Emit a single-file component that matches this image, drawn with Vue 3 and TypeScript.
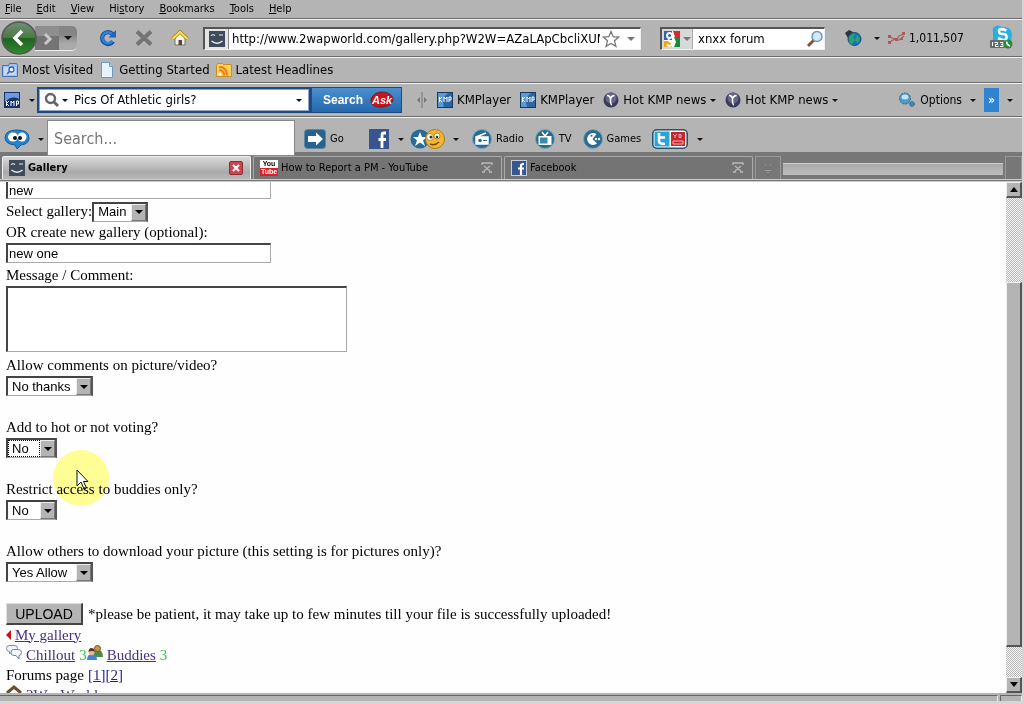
<script setup lang="ts">
import { ref } from 'vue'

interface Question {
  id: string
  label: string
  value: string
  wide: boolean
  focused: boolean
}

const menus = ['File', 'Edit', 'View', 'History', 'Bookmarks', 'Tools', 'Help']
const underlined: Record<string, number> = { History: 2 }

const url = ref('http://www.2wapworld.com/gallery.php?W2W=AZaLApCbcliXUMq')
const webSearch = ref('xnxx forum')
const askSearch = ref('Pics Of Athletic girls?')
const barSearch = ref('')
const title = ref('new')
const gallery = ref('Main')
const newGallery = ref('new one')
const message = ref('')

const questions = ref<Question[]>([
  { id: 'comments', label: 'Allow comments on picture/video?', value: 'No thanks', wide: true, focused: false },
  { id: 'voting', label: 'Add to hot or not voting?', value: 'No', wide: false, focused: true },
  { id: 'buddies', label: 'Restrict access to buddies only?', value: 'No', wide: false, focused: false },
  { id: 'download', label: 'Allow others to download your picture (this setting is for pictures only)?', value: 'Yes Allow', wide: true, focused: false },
])
</script>

<template>
  <div class="window">
    <nav class="menubar" aria-label="Menu">
      <button v-for="m in menus" :key="m" type="button">{{ m.slice(0, underlined[m] ?? 0) }}<u>{{ m.charAt(underlined[m] ?? 0) }}</u>{{ m.slice((underlined[m] ?? 0) + 1) }}</button>
    </nav>

    <div class="navbar">
      <div class="history">
        <button type="button" class="back" aria-label="Back">
          <svg width="36" height="34" viewBox="0 0 36 34">
            <defs><linearGradient id="gb" x1="0" y1="0" x2="0" y2="1"><stop offset="0" stop-color="#6f8f6f" /><stop offset=".48" stop-color="#4b7b4b" /><stop offset=".52" stop-color="#1f641f" /><stop offset="1" stop-color="#2f8a2f" /></linearGradient></defs>
            <ellipse cx="18" cy="17" rx="17" ry="16" fill="url(#gb)" stroke="#555" stroke-width="1.5" />
            <path d="M21 10l-7 7 7 7" fill="none" stroke="#fff" stroke-width="3.5" />
          </svg>
        </button>
        <button type="button" class="forward" aria-label="Forward">
          <svg width="24" height="25" viewBox="0 0 24 25"><path d="M10 8l5 5-5 5" fill="none" stroke="#c8c8c8" stroke-width="3" /></svg>
        </button>
        <button type="button" class="recent" aria-label="Recent pages"><i class="caret"></i></button>
      </div>
      <div class="navicons">
        <button type="button" aria-label="Reload">
          <svg width="18" height="18" viewBox="0 0 18 18"><path d="M14 12.5A6 6 0 1 1 13.5 5" fill="none" stroke="#174a9a" stroke-width="4.2" /><path d="M13.5 12A5.600 5.600 0 1 1 13 5" fill="none" stroke="#2b86dc" stroke-width="2.400" /><path d="M17 1v7.500H9.500z" fill="#1e64b8" /></svg>
        </button>
        <button type="button" aria-label="Stop">
          <svg width="18" height="18" viewBox="0 0 18 18"><path d="M2 2.500l14 13M16 2.500l-14 13" stroke="#747474" stroke-width="4" /></svg>
        </button>
        <button type="button" aria-label="Home">
          <svg width="18" height="18" viewBox="0 0 18 18"><path d="M4 9l5-5 5 5v7H4z" fill="#f4f1ea" stroke="#777" /><path d="M7.500 11h3.500v5H7.500z" fill="#5a4630" /><path d="M1.500 10L9 2.800l7.500 7.200" fill="none" stroke="#9b7a10" stroke-width="3.400" /><path d="M1.500 10L9 2.800l7.500 7.200" fill="none" stroke="#ffe14a" stroke-width="2" /></svg>
        </button>
      </div>
      <div class="urlbox sunken">
        <span class="site"><svg width="16" height="16" viewBox="0 0 16 16"><rect width="16" height="16" fill="#3f4a5c" /><path d="M2 4.500q2-1.500 4 0M10 4h4" fill="none" stroke="#e8ecf4" stroke-width="1.200" /><path d="M2.500 10q5.500 4.500 11 0" fill="none" stroke="#e8ecf4" stroke-width="1.500" /></svg></span>
        <input v-model="url" type="text" aria-label="Address" />
        <svg width="18" height="18" viewBox="0 0 18 18"><path d="M9 1.500l2.200 5.200 5.500.4-4.200 3.700 1.400 5.600L9 13.400l-4.900 3 1.400-5.600L1.300 7.100l5.500-.4z" fill="#fff" stroke="#777" stroke-width="1.300" /></svg>
        <i class="caret grey"></i>
      </div>
      <div class="searchbox sunken">
        <span class="engine">
          <svg width="16" height="16" viewBox="0 0 16 16"><rect width="16" height="16" fill="#fff" /><path d="M9 0h7v6h-5z" fill="#d92a2a" /><path d="M10 6h6v10h-6l2-5z" fill="#198a3c" /><path d="M0 0h8v9H0z" fill="#2d62b8" /><path d="M0 10h8v6H0z" fill="#f0a51e" /><circle cx="5.500" cy="4.500" r="2.500" fill="#2d62b8" stroke="#fff" stroke-width="2" /><path d="M5 8q-1 2 2 3t0 3.500q-3 1-4-1" fill="none" stroke="#fff" stroke-width="2" /></svg>
          <i class="caret grey"></i>
        </span>
        <input v-model="webSearch" type="text" aria-label="Web search" />
        <svg width="18" height="18" viewBox="0 0 18 18"><path d="M8 10L2 16" stroke="#8a5034" stroke-width="3" /><circle cx="11" cy="6.500" r="5" fill="#cfe9fb" stroke="#7297bb" stroke-width="1.500" /></svg>
      </div>
      <div class="status-icons">
        <svg width="18" height="18" viewBox="0 0 18 18"><path d="M1 4l4-3 4 2-5 6z" fill="#29343e" /><circle cx="10.500" cy="10" r="6.500" fill="#1e6fc8" stroke="#1c4a72" /><path d="M5 8q3-4 7-3l-3 3 2 3-3 5q-4-3-3-8zM13 6l3 3-2 5-3-3z" fill="#27a56a" /></svg>
        <i class="caret"></i>
        <span class="rank"><svg width="18" height="14" viewBox="0 0 18 14"><path d="M1 5l3 2 4 2 3-4 5-2M2 11l5-3 4 1 5-4" fill="none" stroke="#b05a5a" stroke-width="1.200" /><path d="M0 4h3v3H0zM0 10h3v3H0zM7 7h3v3H7zM14 1h3v3h-3zM12 7h3v2h-3z" fill="#a95a5a" /></svg>1,011,507</span>
        <svg width="26" height="26" viewBox="0 0 26 26"><path d="M4 2q4-3 8 0 9-1 10 7l-1 8H3V7q-1-3 1-5z" fill="#27aee3" /><path d="M16.500 5.500Q9 2.500 9 6t4 3 3.500 4T8 13" fill="none" stroke="#fff" stroke-width="2.600" /><rect y="15" width="15" height="8" rx="1" fill="#636b68" /><path d="M2.500 17v4M4.500 17.500h3v2h-2v2h3M10 17.500h3v4h-3M11 19.500h2" fill="none" stroke="#fff" stroke-width="1" /><circle cx="18" cy="19" r="4.500" fill="#2c8a35" /><path d="M17 16.500q-1 3 3 4.500" fill="none" stroke="#fff" stroke-width="1.500" /></svg>
      </div>
    </div>

    <div class="bookmarks">
      <a href="#"><svg width="16" height="16" viewBox="0 0 16 16"><path d="M.5 3.500h6l1-2h7l1 2v11H.5z" fill="#9fc0f2" stroke="#4a70b4" /><path d="M2 5h12v8H2z" fill="#c5dafa" /><circle cx="9.500" cy="7.500" r="2.500" fill="#eaf3ff" stroke="#3360b8" stroke-width="1.300" /><path d="M7.500 9.500L5 12" stroke="#3360b8" stroke-width="1.600" /></svg>Most Visited</a>
      <a href="#"><svg width="16" height="16" viewBox="0 0 16 16"><path d="M2.500.5h8l3 4v11h-11z" fill="#e6f2ff" stroke="#7296bf" /><path d="M10.500.5v4h3" fill="#b6d3f2" stroke="#7296bf" /></svg>Getting Started</a>
      <a href="#"><svg width="16" height="16" viewBox="0 0 16 16"><path d="M.5 3.500l1-2h5l1 1h8v12H.5z" fill="#ffcf58" stroke="#c88d22" /><circle cx="4" cy="12" r="1.500" fill="#fff" /><path d="M3 8q5 0 5 5.500M3 5q8 0 8 8.500" fill="none" stroke="#f07c14" stroke-width="2" /></svg>Latest Headlines</a>
    </div>

    <div class="askbar">
      <div class="kmp-menu"><svg width="16" height="16" viewBox="0 0 16 16"><rect width="16" height="16" fill="#17336e" /><path d="M1 1h14v6q-7-4-14 3z" fill="#6f9ade" /><path d="M2.500 9v5M5 9l-2.500 2.500L5 14M7 14V9l1.500 2L10 9v5M12.500 14V9h2v3h-2" fill="none" stroke="#fff" stroke-width="1" /></svg><i class="caret"></i></div>
      <div class="askbox">
        <svg width="16" height="16" viewBox="0 0 16 16"><circle cx="6.500" cy="6.500" r="4.500" fill="none" stroke="#666" stroke-width="2.400" /><path d="M10 10l4 4" stroke="#666" stroke-width="3" /></svg>
        <i class="caret"></i>
        <input v-model="askSearch" type="text" aria-label="Ask search" />
        <i class="caret"></i>
      </div>
      <button type="button" class="askbtn">Search
        <span class="ask"><svg width="24" height="18" viewBox="0 0 24 18"><path d="M1 8Q4 1 12 1t11 6q0 8-10 9T1 11z" fill="#c4161c" stroke="#7d1a24" /></svg><em>Ask</em></span>
      </button>
      <div class="asklinks">
        <svg class="grip" width="12" height="16" viewBox="0 0 12 16"><path d="M6 0v16" stroke="#777" /><path d="M4 5v6L1 8zM8 5v6l3-3z" fill="#777" /></svg>
        <button v-for="n in 2" :key="n" type="button" class="tool"><svg width="16" height="16" viewBox="0 0 16 16"><rect x=".5" y=".5" width="15" height="15" fill="#2a66a2" stroke="#173861" /><path d="M1 1h10Q4 6 7 15H1z" fill="#5a9cd2" /><path d="M2.500 5v5M5 5L2.500 7.500 5 10M7 10V5l1.500 2L10 5v5M12 10V5h2v3h-2" fill="none" stroke="#fff" stroke-width="1" /></svg>KMPlayer</button>
        <button v-for="n in 2" :key="'h' + n" type="button" class="tool"><svg width="16" height="16" viewBox="0 0 16 16"><circle cx="8" cy="8" r="7.500" fill="#39395c" /><circle cx="8" cy="6" r="5.500" fill="#66668c" /><path d="M4 3.500q3.500 0 3.500 4.500T9 13M11.500 3.500Q7 4 7.500 9" fill="none" stroke="#fff" stroke-width="1.500" /></svg>Hot KMP news<i class="caret"></i></button>
      </div>
      <div class="askend">
        <button type="button" class="tool"><svg width="18" height="16" viewBox="0 0 18 16"><circle cx="7" cy="6.500" r="5.500" fill="#4d9cc8" stroke="#31607c" stroke-dasharray="2 1" /><ellipse cx="7" cy="5" rx="3.500" ry="2.500" fill="#bfe5f7" /><circle cx="14" cy="12" r="2.500" fill="#4485ad" stroke="#31607c" stroke-dasharray="1 1" /></svg>Options</button>
        <i class="caret"></i>
        <button type="button" class="more" aria-label="More">»</button>
        <i class="caret"></i>
      </div>
    </div>

    <div class="babbar">
      <div class="bubble"><svg width="26" height="20" viewBox="0 0 26 20"><path d="M1 9Q1 1 13 1t12 8q0 6-8 7l-4 4-2-4Q1 15 1 9z" fill="#2383cf" stroke="#1a5d99" /><ellipse cx="9" cy="8" rx="5" ry="4.500" fill="#fff" /><ellipse cx="18" cy="8" rx="4.500" ry="4.500" fill="#fff" /><circle cx="11" cy="9" r="2" fill="#111" /><circle cx="16" cy="9" r="2" fill="#111" /></svg><i class="caret"></i></div>
      <input v-model="barSearch" class="babinput" type="text" placeholder="Search..." aria-label="Toolbar search" />
      <button type="button" class="tool go"><svg width="22" height="20" viewBox="0 0 22 20"><rect x=".5" y=".5" width="21" height="19" rx="3" fill="#28628e" stroke="#5e87a4" /><path d="M4 7h8V3.500l7 6.500-7 6.500V13H4z" fill="#fff" /></svg>Go</button>
      <div class="pair fb"><svg width="20" height="20" viewBox="0 0 20 20"><rect width="20" height="20" fill="#37558f" /><path d="M17 4h-2q-2 0-2 2v13M9.500 10.500H17" fill="none" stroke="#fff" stroke-width="2.800" /></svg><i class="caret"></i></div>
      <div class="pair smile"><svg width="36" height="20" viewBox="0 0 36 20"><circle cx="10" cy="10" r="9.500" fill="#266b9a" /><path d="M10 3l2 5h5l-4 3.500 2 5.500-5-3.500L5 17l2-5.500L3 8h5z" fill="#fff" /><circle cx="25" cy="10" r="9.500" fill="#f5b82a" stroke="#a67b1c" /><circle cx="20" cy="8" r="3.500" fill="#fff" stroke="#b98924" /><circle cx="21" cy="8" r="1.500" fill="#333" /><circle cx="27" cy="7" r="3" fill="#fff" stroke="#b98924" /><circle cx="27" cy="8" r="1.300" fill="#333" /><path d="M20 15q5 2 9-2" fill="none" stroke="#7c4514" stroke-width="1.500" /></svg><i class="caret"></i></div>
      <div class="medialinks">
        <button type="button" class="tool"><svg width="20" height="20" viewBox="0 0 20 20"><circle cx="10" cy="10" r="9.500" fill="#2b6b8f" stroke="#78a4bc" /><path d="M4 8h12v7H4zM4 8l10-4" fill="#fff" stroke="#fff" stroke-width="1.500" /><circle cx="8" cy="11.500" r="1.800" fill="#2b6b8f" /><path d="M11 11.500h4" stroke="#2b6b8f" /></svg>Radio</button>
        <button type="button" class="tool"><svg width="20" height="20" viewBox="0 0 20 20"><circle cx="10" cy="10" r="9.500" fill="#2b6b8f" stroke="#78a4bc" /><path d="M7 3l3 4 3-4" fill="none" stroke="#fff" stroke-width="1.500" /><rect x="3.500" y="7" width="13" height="9" fill="#fff" /><path d="M5 8.500h7.500v6H5z" fill="#3d87ad" /></svg>TV</button>
        <button type="button" class="tool"><svg width="20" height="20" viewBox="0 0 20 20"><circle cx="10" cy="10" r="9.500" fill="#2b6b8f" stroke="#78a4bc" /><path d="M13.500 5A6 6 0 1 0 14 14.500L9.500 10z" fill="#fff" /><circle cx="8.500" cy="6.800" r="1" fill="#2b6b8f" /><circle cx="13" cy="10" r="1.200" fill="#fff" /><circle cx="16" cy="10" r="1.200" fill="#fff" /></svg>Games</button>
        <div class="pair social"><svg width="36" height="20" viewBox="0 0 36 20"><rect x=".8" y=".8" width="34.400" height="18.400" rx="4" fill="#fff" stroke="#27536c" stroke-width="1.600" /><path d="M2.500 2.500h15v15h-15z" fill="#2ca5d5" /><path d="M7 4v8q0 3 6 3M7 8.500h6" fill="none" stroke="#fff" stroke-width="2.600" /><rect x="19" y="3" width="14" height="14" fill="#c9262c" /><path d="M21 5l2 2 2-2M23 7v2M27 5.500h2v3h-2zM21 12h10v3H21z" fill="none" stroke="#e9b7b9" /></svg><i class="caret"></i></div>
      </div>
    </div>

    <div class="tabstrip">
      <div class="tab active">
        <svg width="16" height="16" viewBox="0 0 16 16"><rect width="16" height="16" fill="#3f4a5c" /><path d="M2 4.500q2-1.500 4 0M10 4h4" fill="none" stroke="#e8ecf4" stroke-width="1.200" /><path d="M2.500 10q5.500 4.500 11 0" fill="none" stroke="#e8ecf4" stroke-width="1.500" /></svg>
        <span>Gallery</span>
        <button type="button" aria-label="Close tab"><svg width="14" height="14" viewBox="0 0 14 14"><rect x=".5" y=".5" width="13" height="13" rx="1.500" fill="#c9464f" stroke="#8e2b33" /><path d="M4 4l6 6M10 4l-6 6" stroke="#fff" stroke-width="2" /></svg></button>
      </div>
      <div class="tab">
        <span class="yt"><b>You</b><b class="tube">Tube</b></span>
        <span>How to Report a PM - YouTube</span>
        <button type="button" aria-label="Close tab"><svg width="14" height="14" viewBox="0 0 14 14"><path d="M2 4V2h10v2M4 5l6 5M10 5l-6 5M2 11h3M9 11h3" fill="none" stroke="#b8b8b8" stroke-width="1.300" /></svg></button>
      </div>
      <div class="tab">
        <svg width="16" height="16" viewBox="0 0 16 16"><rect x=".5" y=".5" width="15" height="15" fill="#37558f" stroke="#c5cede" /><path d="M13 4h-1q-2 0-2 2v9M7 8.500h6" fill="none" stroke="#fff" stroke-width="2.200" /></svg>
        <span>Facebook</span>
        <button type="button" aria-label="Close tab"><svg width="14" height="14" viewBox="0 0 14 14"><path d="M2 4V2h10v2M4 5l6 5M10 5l-6 5M2 11h3M9 11h3" fill="none" stroke="#b8b8b8" stroke-width="1.300" /></svg></button>
      </div>
      <div class="newtab"><svg width="12" height="12" viewBox="0 0 12 12"><path d="M3 3h1M8 3h1M3 8.500h6M5 10.500h2" stroke="#9c9c9c" /></svg></div>
      <div class="stripe"></div>
      <div class="alltabs"></div>
    </div>

    <div class="viewport">
      <main class="page">
        <input v-model="title" class="field cut" type="text" aria-label="Title" />
        <div class="row"><label for="gallery">Select gallery:</label><span class="combo main"><select id="gallery" v-model="gallery"><option>Main</option></select><i class="drop"></i></span></div>
        <label class="row" for="newgallery">OR create new gallery (optional):</label>
        <input id="newgallery" v-model="newGallery" class="field" type="text" />
        <label class="row msg" for="message">Message / Comment:</label>
        <textarea id="message" v-model="message" class="field"></textarea>
        <div v-for="q in questions" :key="q.id" class="question">
          <label class="row" :for="q.id">{{ q.label }}</label>
          <span class="combo" :class="{ wide: q.wide, focused: q.focused }"><select :id="q.id" v-model="q.value"><option>{{ q.value }}</option></select><i class="drop"></i></span>
        </div>
        <div class="upload"><button type="button">UPLOAD</button><span>*please be patient, it may take up to few minutes till your file is successfully uploaded!</span></div>
        <div class="links"><svg width="6" height="10" viewBox="0 0 6 10"><path d="M5 0v10L0 5z" fill="#c8141e" /></svg><a href="#" class="after-arrow">My gallery</a></div>
        <div class="links">
          <svg width="16" height="20" viewBox="0 0 16 20"><path d="M3 .5h6q2.500 0 2.500 3t-3 3H6L3.500 9V6.500Q.5 6.500.5 3.500T3 .5z" fill="#eef2f8" stroke="#8090a8" /><path d="M7.500 4.500h5q3 0 3 3t-2.500 3V14L10 10.500H8q-3 0-3-3t2.500-3z" fill="#f4f7fb" stroke="#70819b" /></svg>
          <a href="#">Chillout</a><span class="count">3</span>
          <svg width="16" height="20" viewBox="0 0 16 20"><path d="M7 12q-1-7 4-7t5 7z" fill="#4d8a4a" /><circle cx="10.500" cy="3.500" r="3" fill="#c59742" stroke="#6e5221" /><path d="M0 15q0-6 5-6t5 6z" fill="#4285d0" /><circle cx="4.500" cy="7.500" r="2.800" fill="#eab58f" /><path d="M1.500 7q0-4 3-4t3.500 4q-3-2-6.500 0z" fill="#5c3420" /></svg>
          <a href="#">Buddies</a><span class="count">3</span>
        </div>
        <div class="links"><span class="forums">Forums page</span><a href="#" class="visited">[1]</a><a href="#" class="visited flush">[2]</a></div>
        <div class="links"><svg width="16" height="20" viewBox="0 0 16 20"><path d="M3 8v8h10V8" fill="#e8e0d0" stroke="#77664a" /><path d="M1 8l7-6 7 6" fill="none" stroke="#6b5030" stroke-width="3" /></svg><a href="#">2WapWorld</a></div>
        <div class="spot"><svg width="14" height="22" viewBox="0 0 14 22"><path d="M1 1v16l4-4 3 7 2.500-1-3-6.500H12z" fill="#fff" stroke="#111" /></svg></div>
      </main>
      <div class="scrollbar" aria-hidden="true">
        <div class="arrow"><svg width="8" height="5" viewBox="0 0 8 5"><path d="M4 0l4 5H0z" fill="#000" /></svg></div>
        <div class="gap top"></div>
        <div class="thumb"></div>
        <div class="gap bottom"></div>
        <div class="arrow"><svg width="8" height="5" viewBox="0 0 8 5"><path d="M0 0h8L4 5z" fill="#000" /></svg></div>
      </div>
    </div>
    <footer class="statusbar"><div></div><div class="corner"></div></footer>
  </div>
</template>

<style>
html, body, #app { height: 100%; }
body { margin: 0; overflow: hidden; }
</style>

<style scoped>
* { box-sizing: border-box; }
.window {
  height: 100vh; display: flex; flex-direction: column;
  background: #b4b4b4; border-right: 2px solid #d4d4d4;
  font: 13px/16px "DejaVu Sans Condensed", "Noto Sans", sans-serif; color: #000;
}
svg { display: block; flex: none; }
button { font: inherit; color: inherit; background: none; border: 0; padding: 0; margin: 0; }
input { font: inherit; color: inherit; border: 0; outline: 0; padding: 0; margin: 0; background: #fff; min-width: 0; }
.caret { flex: none; width: 0; height: 0; border: 3px solid transparent; border-top-color: #111; border-bottom: 0; }
.caret.grey { border-width: 4px 4px 0; border-top-color: #777; }
.menubar, .navbar, .bookmarks, .askbar { flex: none; border-bottom: 1px solid #6c6c6c; box-shadow: 0 1px 0 #f4f4f4; margin-bottom: 1px; display: flex; align-items: center; }
.menubar { height: 19px; padding: 0 5px; gap: 15px; font-size: 11px; }
.menubar button { white-space: nowrap; }
.navbar { height: 37px; }
.history { flex: none; display: flex; align-items: center; width: 97px; padding-left: 1px; }
.back { z-index: 1; }
.forward { height: 25px; background: linear-gradient(#8e8e8e 40%, #747474 42%); margin-left: -2px; border-bottom: 1px solid #eee; }
.recent { width: 18px; height: 25px; display: flex; align-items: center; justify-content: center; background: linear-gradient(#858585 35%, #aaa 75%); border-radius: 0 5px 5px 0; border-bottom: 1px solid #eee; }
.recent .caret { border-width: 4px 4px 0; }
.navicons { flex: none; display: flex; gap: 18px; width: 106px; padding-left: 2px; }
.sunken { background: #fff; border: 1px solid #eee; border-top: 2px solid #555; border-left: 2px solid #555; height: 23px; display: flex; align-items: center; }
.urlbox { flex: 1; min-width: 0; padding-right: 5px; }
.site { width: 24px; height: 20px; display: flex; align-items: center; justify-content: center; background: #e4e4e4; border-right: 1px solid #888; margin-right: 3px; flex: none; }
.urlbox input { flex: 1; margin-right: 2px; }
.urlbox .caret { margin-left: 7px; }
.searchbox { flex: none; width: 165px; margin-left: 19px; }
.engine { flex: none; width: 31px; height: 20px; padding-left: 2px; display: flex; gap: 3px; align-items: center; background: #d8d8d8; border-right: 1px solid #aaa; margin-right: 5px; }
.searchbox input { flex: 1; }
.status-icons { flex: none; width: 197px; padding-left: 19px; display: flex; align-items: center; }
.status-icons > .caret { margin: 0 8px 0 12px; }
.rank { display: flex; align-items: center; gap: 3px; width: 102px; font-size: 12px; }
.bookmarks { height: 25px; padding-left: 2px; gap: 6px; }
.bookmarks a { display: flex; align-items: center; gap: 4px; color: #000; text-decoration: none; }
.askbar { height: 33px; padding: 0 9px 0 4px; }
.kmp-menu { width: 33px; display: flex; align-items: center; gap: 9px; flex: none; }
.askbox { flex: none; width: 274px; height: 26px; border: 2px solid #1f4a80; outline: 1px solid #8ea6c2; outline-offset: -3px; background: #fff; display: flex; align-items: center; padding: 0 7px 0 5px; gap: 2px; }
.askbox input { flex: 1; margin-left: 4px; }
.askbtn { flex: none; width: 91px; height: 26px; background: linear-gradient(#4a8fcf, #2668ac); border: 1px solid #1f4a80; color: #fff; font: bold 12px/16px "Liberation Sans", sans-serif; display: flex; align-items: center; gap: 7px; padding-left: 11px; }
.ask { display: grid; place-items: center; }
.ask > * { grid-area: 1 / 1; }
.ask em { font-size: 11px; }
.asklinks { flex: 1; min-width: 0; display: flex; align-items: center; gap: 9px; padding-left: 14px; }
.tool { display: flex; align-items: center; gap: 4px; white-space: nowrap; flex: none; }
.askend { flex: none; display: flex; align-items: center; gap: 8px; font-size: 12px; }
.more { width: 15px; height: 24px; background: #2e84d2; color: #fff; font-weight: bold; }
.babbar { flex: none; height: 34px; padding-bottom: 3px; display: flex; align-items: flex-end; font-size: 11px; }
.bubble { flex: none; width: 42px; padding-left: 4px; display: flex; align-items: center; gap: 8px; margin-right: 5px; }
.babinput { flex: none; width: 248px; height: 36px; border: 1px solid #888; padding-left: 6px; font-size: 16px; margin-bottom: -7px; position: relative; z-index: 1; }
.babinput::placeholder { color: #777; opacity: 1; }
.go { width: 74px; padding-left: 9px; }
.pair { display: flex; align-items: center; gap: 9px; flex: none; }
.fb { width: 41px; }
.smile { width: 62px; gap: 7px; }
.medialinks { display: flex; gap: 11px; }
.tabstrip { flex: none; height: 30px; padding: 4px 0 0 2px; background: #777; border-bottom: 3px double #ccc; display: flex; gap: 2px; font-size: 11px; }
.tab { width: 249px; flex: none; border: 1px solid #aaa; border-bottom: 0; border-radius: 2px 2px 0 0; background: #747474; display: flex; align-items: center; gap: 3px; padding: 0 7px 0 6px; white-space: nowrap; }
.tab.active { background: linear-gradient(#d8d8d8, #aaa 70%, #b8b8b8); border-color: #eee; font-weight: bold; }
.tab button { margin-left: auto; }
.yt { width: 18px; font: bold 7px/8px "Liberation Sans", sans-serif; background: #fff; }
.yt b { display: block; text-align: center; }
.yt .tube { background: #d92226; color: #fff; }
.newtab { width: 26px; border: 1px solid #999; border-bottom: 0; display: flex; align-items: center; justify-content: center; flex: none; }
.stripe { flex: 1; height: 12px; margin-top: 7px; background: linear-gradient(#aaa, #bdbdbd); border-top: 1px solid #ccc; }
.alltabs { width: 17px; border: 1px solid #999; border-bottom: 0; flex: none; }
.viewport { flex: 1; min-height: 0; display: flex; background: #fefefe; }
.page { position: relative; flex: 1; min-width: 0; overflow: hidden; padding-left: 6px; font: 15px/21px "Liberation Serif", serif; }
.row { display: flex; align-items: center; height: 21px; white-space: nowrap; }
.field { display: block; width: 265px; height: 20px; border: 1px solid #aaa; border-top: 2px solid #444; border-left: 2px solid #444; font: 13px/16px "Liberation Sans", sans-serif; padding: 0 1px; margin-bottom: 1px; background: #fff; }
.field.cut { border-top: 0; height: 17px; margin-bottom: 2px; }
.row.msg { height: 22px; }
textarea.field { width: 341px; height: 66px; resize: none; margin-bottom: 3px; outline: 0; }
.combo { display: flex; width: 51px; height: 20px; border: 1px solid #aaa; border-top: 2px solid #444; border-left: 2px solid #444; border-right: 2px solid #555; background: #fff; }
.combo.main { width: 56px; }
.combo.wide { width: 87px; }
.combo select { flex: 1; min-width: 0; appearance: none; border: 0; outline: 0; background: none; color: #000; padding: 0 0 0 4px; margin: 0; border-radius: 0; font: 13px/16px "Liberation Sans", sans-serif; }
.combo.focused select { border: 1px dotted #000; padding-left: 3px; }
.drop { flex: none; width: 15px; background: #b4b4b4; border: 1px solid #eee; border-right-color: #777; border-bottom-color: #777; display: grid; place-items: center; }
.drop::after { content: ""; border: 4px solid transparent; border-top-color: #000; border-bottom: 0; }
.question { margin-bottom: 21px; }
.upload { display: flex; align-items: center; gap: 5px; height: 22px; white-space: nowrap; }
.upload button { width: 77px; height: 22px; background: #b4b4b4; border: 1px solid #ddd; border-right: 2px solid #444; border-bottom: 2px solid #444; font: 14px/16px "Liberation Sans", sans-serif; }
.links { display: flex; align-items: center; height: 20px; white-space: nowrap; }
.links a { color: #47307c; margin-left: 4px; }
.links a.after-arrow { margin-left: 3px; }
.links a.visited { color: #1e1e90; }
.links a.flush { margin-left: 0; }
.count { color: #3fc04a; margin-left: 4px; }
.spot { position: absolute; left: 53px; top: 268px; width: 56px; height: 56px; border-radius: 50%; background: #ffff96; mix-blend-mode: multiply; padding: 19px 0 0 23px; }
.scrollbar { flex: none; width: 16px; display: flex; flex-direction: column; }
.arrow { flex: none; height: 16px; background: #b4b4b4; border: 1px solid #eee; border-right: 2px solid #555; border-bottom: 2px solid #555; display: grid; place-items: center; }
.gap { background: repeating-conic-gradient(#b8b8b8 0 25%, #f4f4f4 0 50%) 0 0 / 2px 2px; }
.gap.top { flex: 85; }
.thumb { flex: 364; background: #b4b4b4; border: 1px solid #eee; border-right: 2px solid #555; border-bottom: 2px solid #555; }
.gap.bottom { flex: 30; }
.statusbar { flex: none; height: 11px; border-top: 2px solid #b4b4b4; border-bottom: 3px solid #d6d6d6; display: flex; gap: 2px; }
.statusbar div { flex: 1; border-top: 1px solid #666; border-right: 1px solid #eee; }
.statusbar .corner { flex: none; width: 22px; border-left: 1px solid #666; }
</style>
